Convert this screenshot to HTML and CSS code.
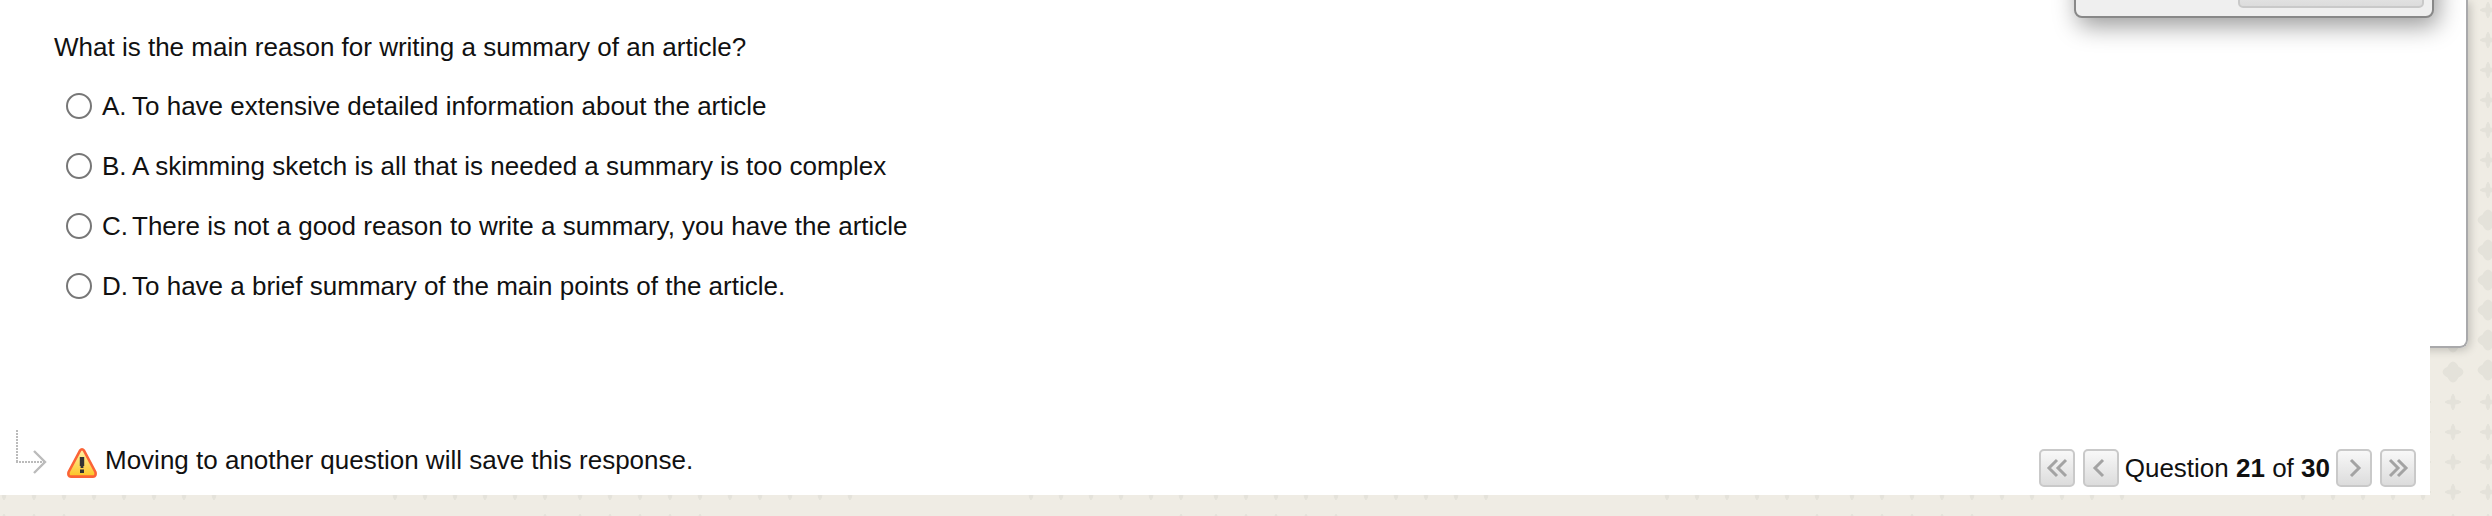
FILE: index.html
```html
<!DOCTYPE html>
<html lang="en">
<head>
  <meta charset="utf-8">
  <title>Take Test</title>
  <meta name="viewport" content="width=device-width, initial-scale=1.0">
  <link rel="stylesheet" href="styles.css">
</head>
<body>

  <!-- Page texture -->
  <svg class="texture" aria-hidden="true">
    <defs>
      <path id="cross" d="M0 -8q2 2 2 6q4 0 6 2q-2 2 -6 2q0 4 -2 6q-2 -2 -2 -6q-4 0 -6 -2q2 -2 6 -2q0 -4 2 -6z" stroke="#e4e2da" stroke-width="1" />
      <path id="clover" d="M-4 -8Q0 -13 4 -8Q5 -5 8 -4Q13 0 8 4Q5 5 4 8Q0 13 -4 8Q-5 5 -8 4Q-13 0 -8 -4Q-5 -5 -4 -8z" />
      <g id="row">
        <use href="#cross" x="10" /><use href="#cross" x="40" /><use href="#cross" x="70" />
        <use href="#cross" x="100" /><use href="#cross" x="130" /><use href="#cross" x="160" />
        <use href="#cross" x="195" /><use href="#cross" x="225" /><use href="#cross" x="255" />
        <use href="#cross" x="285" /><use href="#cross" x="315" /><use href="#cross" x="345" />
        <use href="#cross" x="375" /><use href="#cross" x="405" /><use href="#cross" x="435" />
        <use href="#cross" x="465" />
      </g>
      <g id="shortrow">
        <use href="#cross" x="160" /><use href="#cross" x="195" /><use href="#cross" x="225" />
        <use href="#cross" x="255" /><use href="#cross" x="285" /><use href="#cross" x="315" />
      </g>
      <pattern id="tile" x="385" y="0" width="636" height="640" patternUnits="userSpaceOnUse">
        <g fill="#e4e2da">
          <use href="#cross" x="195" y="10" /><use href="#cross" x="195" y="40" />
          <use href="#cross" x="195" y="70" /><use href="#cross" x="195" y="100" />
          <use href="#cross" x="195" y="130" /><use href="#cross" x="195" y="160" />
          <use href="#cross" x="195" y="190" />
          <use href="#clover" x="195" y="220" /><use href="#clover" x="195" y="250" />
          <use href="#clover" x="195" y="280" /><use href="#clover" x="195" y="310" />
          <use href="#clover" x="195" y="340" /><use href="#clover" x="195" y="370" />
          <use href="#clover" x="160" y="342" /><use href="#clover" x="160" y="372" />
          <use href="#row" y="402" /><use href="#row" y="432" />
          <use href="#row" y="462" /><use href="#row" y="492" />
          <use href="#shortrow" y="522" />
        </g>
      </pattern>
    </defs>
    <rect width="100%" height="100%" fill="url(#tile)" />
  </svg>

  <form class="page">

    <!-- Question -->
    <fieldset class="card">
      <legend class="question">What is the main reason for writing a summary of an article?</legend>
      <div class="answers">
        <label class="answer">
          <input type="radio" name="answer" value="a">
          <span class="letter">A.</span>
          <span>To have extensive detailed information about the article</span>
        </label>
        <label class="answer">
          <input type="radio" name="answer" value="b">
          <span class="letter">B.</span>
          <span>A skimming sketch is all that is needed a summary is too complex</span>
        </label>
        <label class="answer">
          <input type="radio" name="answer" value="c">
          <span class="letter">C.</span>
          <span>There is not a good reason to write a summary, you have the article</span>
        </label>
        <label class="answer">
          <input type="radio" name="answer" value="d">
          <span class="letter">D.</span>
          <span>To have a brief summary of the main points of the article.</span>
        </label>
      </div>
    </fieldset>

    <!-- Save notice and paging -->
    <div class="bottombar">
      <svg class="arrow" width="32" height="46" viewBox="0 0 32 46" fill="none" stroke="#bbb" stroke-width="2" aria-hidden="true">
        <path d="M2 1V33" stroke-dasharray="2 1" />
        <path d="M1 33H30" stroke-dasharray="2 1" />
        <path d="M19 22L30 33L19 44" stroke-width="2.4" />
      </svg>
      <svg class="warning" width="30" height="30" viewBox="0 0 30 30" aria-hidden="true">
        <defs>
          <linearGradient id="sun" x1="0" y1="0" x2="0" y2="1">
            <stop offset="0" stop-color="#fff3a8" />
            <stop offset="1" stop-color="#fcc425" />
          </linearGradient>
        </defs>
        <path d="M13 2.6Q15 0 17 2.6L28.4 24Q29.4 28.4 26 28.6H4Q0.6 28.4 1.6 24Z" fill="url(#sun)" stroke="#fb6336" stroke-width="2.6" stroke-linejoin="round" />
        <path d="M12.8 9H17.2V18H16.4V20H13.6V18H12.8ZM13 21.4H17V25H13Z" fill="#333" />
      </svg>
      <p class="notice">Moving to another question will save this response.</p>
      <div class="paging">
        <button type="button" aria-label="First question">
          <svg width="32" height="34" viewBox="0 0 32 34"><path d="M16 9L8 17L16 25M25 9L17 17L25 25" /></svg>
        </button>
        <button type="button" aria-label="Previous question">
          <svg width="32" height="34" viewBox="0 0 32 34"><path d="M18 9L10 17L18 25" /></svg>
        </button>
        <span class="count">Question <b>21</b> of <b>30</b></span>
        <button type="button" aria-label="Next question">
          <svg width="32" height="34" viewBox="0 0 32 34"><path d="M13 9L21 17L13 25" /></svg>
        </button>
        <button type="button" aria-label="Last question">
          <svg width="32" height="34" viewBox="0 0 32 34"><path d="M8 9L16 17L8 25M16 9L24 17L16 25" /></svg>
        </button>
      </div>
    </div>

    <!-- Floating save panel, scrolled mostly out of view -->
    <div class="floater">
      <button type="button" aria-label="Save"></button>
    </div>
  </form>

</body>
</html>
```

FILE: styles.css
```css
body {
  background: #efece4;
  color: #111;
  font-family: "Liberation Sans", Arial, Helvetica, sans-serif;
  font-size: 26px;
  line-height: 30px;
  margin: 0;
}

.texture {
  position: absolute;
  top: 0;
  left: 0;
  width: 100%;
  height: 100%;
}

.page {
  position: relative;
  overflow: hidden;
  padding-bottom: 22px;
}

/* question */
.card {
  background: #fff;
  border: 2px solid #a9a9ab;
  border-top: 0;
  border-left: 0;
  border-radius: 0 0 8px 0;
  box-shadow: 2px 2px 10px rgba(0, 0, 0, 0.2);
  margin: 0 24px 0 0;
  padding: 32px 54px 30px;
}

.question {
  float: left;
  padding: 0;
}

.answers {
  clear: both;
  padding: 14px 0 0 12px;
}

.answer {
  display: flex;
  align-items: center;
  height: 60px;
}

.answer input {
  appearance: none;
  width: 26px;
  height: 26px;
  margin: 0 10px 0 0;
  border: 2px solid #777;
  border-radius: 50%;
  background: #fff;
}

.answer input:checked {
  background: #777;
  box-shadow: inset 0 0 0 4px #fff;
}

.letter {
  width: 30px;
}

/* bottom bar */
.bottombar {
  position: relative;
  display: flex;
  align-items: flex-start;
  background: #fff;
  margin: -2px 62px 0 0;
  padding: 83px 14px 8px 15px;
}

.warning {
  margin: 19px 8px 0 20px;
}

.notice {
  margin: 16px 0 0;
}

.paging {
  display: flex;
  align-items: center;
  gap: 8px;
  margin: 20px 0 0 auto;
}

.count {
  margin: 0 -2px;
}

.paging button,
.floater button {
  box-sizing: border-box;
  border: 2px solid #c9c9c9;
  border-radius: 5px;
  background: linear-gradient(#f8f8f8, #dcdcdc);
  padding: 0;
}

.paging button {
  width: 36px;
  height: 38px;
}

.paging svg {
  display: block;
  fill: none;
  stroke: #a3a3a3;
  stroke-width: 3;
}

/* floating panel */
.floater {
  position: absolute;
  top: -62px;
  right: 58px;
  box-sizing: border-box;
  display: flex;
  justify-content: flex-end;
  width: 360px;
  padding: 28px 8px 8px;
  background: #efefef;
  border: 2px solid #888;
  border-radius: 8px;
  box-shadow: 4px 8px 24px rgba(0, 0, 0, 0.4);
}

.floater button {
  width: 186px;
  height: 40px;
}
```
